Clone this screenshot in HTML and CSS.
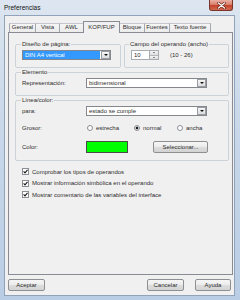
FILE: index.html
```html
<!DOCTYPE html>
<html lang="es">
<head>
<meta charset="utf-8">
<title>Preferencias</title>
<link rel="stylesheet" href="styles.css">
</head>
<body>
<div class="window">
  <div class="titlebar">
    <span class="title">Preferencias</span>
    <span class="close">
      <svg width="9" height="7" viewBox="0 0 9 7"><path d="M1.5 1 L7.5 6 M7.5 1 L1.5 6" stroke="#5a1e14" stroke-width="2.4" stroke-linecap="round"/><path d="M1.5 1 L7.5 6 M7.5 1 L1.5 6" stroke="#ffffff" stroke-width="1.3" stroke-linecap="round"/></svg>
    </span>
  </div>
  <div class="client">
    <div class="tabs">
      <span class="tab t-general">General</span>
      <span class="tab t-vista">Vista</span>
      <span class="tab t-awl">AWL</span>
      <span class="tab t-kop selected">KOP/FUP</span>
      <span class="tab t-bloque">Bloque</span>
      <span class="tab t-fuentes">Fuentes</span>
      <span class="tab t-texto">Texto fuente</span>
    </div>
    <div class="panel">
      <div class="row-top">
        <fieldset class="group g-layout">
          <legend>Diseño de página:</legend>
          <div class="combo combo-layout sel">
            <span class="combo-text">DIN A4 vertical</span>
            <span class="combo-btn"><span class="tri"></span></span>
          </div>
        </fieldset>
        <fieldset class="group g-width">
          <legend>Campo del operando (ancho)</legend>
          <div class="spin-row">
            <div class="spin">
              <span class="spin-edit">10</span>
              <span class="spin-btns">
                <span class="spin-up"><span class="tri-up"></span></span>
                <span class="spin-down"><span class="tri-sm"></span></span>
              </span>
            </div>
            <span class="range">(10 - 26)</span>
          </div>
        </fieldset>
      </div>
      <fieldset class="group g-element">
        <legend>Elemento</legend>
        <div class="field-row">
          <span class="lbl">Representación:</span>
          <div class="combo combo-wide">
            <span class="combo-text">bidimensional</span>
            <span class="combo-btn"><span class="tri"></span></span>
          </div>
        </div>
      </fieldset>
      <fieldset class="group g-line">
        <legend>Línea/color:</legend>
        <div class="field-row">
          <span class="lbl">para:</span>
          <div class="combo combo-wide">
            <span class="combo-text">estado se cumple</span>
            <span class="combo-btn"><span class="tri"></span></span>
          </div>
        </div>
        <div class="grosor-row">
          <span class="lbl">Grosor:</span>
          <span class="opt"><span class="radio"></span>estrecha</span>
          <span class="opt"><span class="radio on"></span>normal</span>
          <span class="opt"><span class="radio"></span>ancha</span>
        </div>
        <div class="color-row">
          <span class="lbl">Color:</span>
          <span class="swatch"></span>
          <span class="btn btn-select">Seleccionar...</span>
        </div>
      </fieldset>
      <div class="checks">
        <div class="check-row"><span class="check"><svg width="5" height="5" viewBox="0 0 5 5"><path d="M0.6 2.4 L2 3.9 L4.5 0.8" fill="none" stroke="#1a1a1a" stroke-width="1.1"/></svg></span>Comprobar los tipos de operandos</div>
        <div class="check-row"><span class="check"><svg width="5" height="5" viewBox="0 0 5 5"><path d="M0.6 2.4 L2 3.9 L4.5 0.8" fill="none" stroke="#1a1a1a" stroke-width="1.1"/></svg></span>Mostrar información simbólica en el operando</div>
        <div class="check-row"><span class="check"><svg width="5" height="5" viewBox="0 0 5 5"><path d="M0.6 2.4 L2 3.9 L4.5 0.8" fill="none" stroke="#1a1a1a" stroke-width="1.1"/></svg></span>Mostrar comentario de las variables del interface</div>
      </div>
    </div>
    <div class="buttons">
      <span class="btn btn-dlg">Aceptar</span>
      <span class="btn btn-dlg btn-cancel">Cancelar</span>
      <span class="btn btn-dlg btn-help">Ayuda</span>
    </div>
  </div>
</div>
</body>
</html>
```
FILE: styles.css
```css
* { box-sizing: border-box; }

body {
  margin: 0;
  font-family: "Liberation Sans", Arial, sans-serif;
  font-size: 6px;
  color: #2e2e2e;
  background: #c3d3e6;
}

.window {
  width: 240px;
  height: 300px;
  overflow: hidden;
  display: flex;
  flex-direction: column;
  background: linear-gradient(180deg, #dde6f0 0%, #cbd9ea 35%, #b9cde4 100%);
}

.titlebar {
  height: 15px;
  display: flex;
  align-items: flex-start;
  padding-left: 4px;
}

.title {
  font-size: 6.5px;
  line-height: 16px;
  color: #111;
}

.close {
  margin-left: auto;
  margin-right: 7px;
  width: 24px;
  height: 11px;
  border: 1px solid #7a3328;
  border-top: none;
  border-radius: 0 0 3px 3px;
  background: linear-gradient(180deg, #eab0a4 0%, #d9806d 45%, #c4442b 55%, #d06a52 100%);
  display: flex;
  align-items: center;
  justify-content: center;
}

.close svg { display: block; }

.client {
  margin-left: 4px;
  width: 231px;
  height: 281px;
  background: #f0f0f0;
  border: 1px solid #90a3ba;
  display: flex;
  flex-direction: column;
}

/* tabs */
.tabs {
  display: flex;
  align-items: flex-end;
  height: 11px;
  margin-top: 5px;
  margin-left: 4px;
}

.tab {
  height: 9px;
  line-height: 7px;
  text-align: center;
  white-space: nowrap;
  border: 1px solid #a3a7ae;
  border-top-color: #c4c8ce;
  border-left: none;
  border-bottom: none;
  background: linear-gradient(180deg, #f5f5f5, #ebebeb);
}

.tab:first-child { border-left: 1px solid #a3a7ae; }

.t-general { width: 27px; }
.t-vista { width: 24px; }
.t-awl { width: 24px; }
.t-kop { width: 37px; }
.t-bloque { width: 25px; }
.t-fuentes { width: 25px; }
.t-texto { width: 41px; }

.tab.selected {
  position: relative;
  z-index: 1;
  height: 12px;
  line-height: 10px;
  margin-left: -1px;
  margin-bottom: -1px;
  border: 1px solid #898c95;
  border-bottom: none;
  background: #f0f0f0;
}

/* panel */
.panel {
  margin-left: 3px;
  width: 225px;
  height: 243px;
  border: 1px solid #898c95;
  background: #f0f0f0;
  padding: 7px 3px 0 6px;
}

.row-top {
  display: flex;
  gap: 3px;
}

fieldset.group {
  margin: 0;
  min-width: 0;
  padding: 2px 6px 7px;
  border: 1px solid #cbd2d8;
  border-radius: 2px;
}

legend {
  padding: 0 1px;
  margin-left: -1px;
  line-height: 8px;
  font-size: 6px;
  color: #2e2e2e;
}

.g-layout { width: 106px; }

.g-width {
  flex: 1;
  padding-left: 4px;
}

.g-width legend { margin-left: -2px; }

.g-element {
  margin-top: 6px;
  padding-top: 1px;
  padding-bottom: 4px;
}

.g-line {
  margin-top: 7px;
  padding-top: 3px;
  padding-bottom: 6px;
}

.field-row {
  display: grid;
  grid-template-columns: 64px 121px;
  align-items: center;
  height: 10px;
}

.lbl { white-space: nowrap; }

/* combo boxes */
.combo {
  display: flex;
  height: 10px;
  border: 1px solid #84878c;
  background: #fff;
}

.combo-layout { width: 89px; }

.combo-text {
  flex: 1;
  line-height: 8px;
  padding-left: 2px;
  white-space: nowrap;
  overflow: hidden;
}

.combo.sel .combo-text {
  background: #3399ff;
  color: #fff;
  margin: 0 1px 0 0;
}

.combo-btn {
  width: 9px;
  border: 1px solid #9a9da3;
  background: linear-gradient(180deg, #f5f5f5, #dcdcdc);
  display: flex;
  align-items: center;
  justify-content: center;
}

.tri {
  width: 0;
  height: 0;
  border-left: 2px solid transparent;
  border-right: 2px solid transparent;
  border-top: 2px solid #111;
}

/* spinner */
.spin-row {
  display: flex;
  align-items: center;
  height: 10px;
}

.spin {
  display: flex;
  height: 10px;
}

.spin-edit {
  width: 18px;
  border: 1px solid #a9acb2;
  border-right: none;
  background: #fff;
  line-height: 8px;
  padding-left: 2px;
}

.spin-btns {
  width: 10px;
  display: flex;
  flex-direction: column;
  border: 1px solid #a9acb2;
}

.spin-up,
.spin-down {
  flex: 1;
  display: flex;
  align-items: center;
  justify-content: center;
  background: linear-gradient(180deg, #f5f5f5, #dedede);
}

.spin-up { border-bottom: 1px solid #b5b8bd; }

.tri-up {
  width: 0;
  height: 0;
  border-left: 1.5px solid transparent;
  border-right: 1.5px solid transparent;
  border-bottom: 1.5px solid #222;
}

.tri-sm {
  width: 0;
  height: 0;
  border-left: 1.5px solid transparent;
  border-right: 1.5px solid transparent;
  border-top: 1.5px solid #222;
}

.range {
  margin-left: 11px;
  white-space: nowrap;
}

/* radios */
.grosor-row {
  display: grid;
  grid-template-columns: 65px 47px 43px auto;
  align-items: center;
  height: 10px;
  margin-top: 7px;
}

.opt {
  display: flex;
  align-items: center;
  gap: 3px;
  white-space: nowrap;
}

.radio {
  width: 6px;
  height: 6px;
  border-radius: 50%;
  border: 1px solid #8b8e93;
  background: #fff;
  flex: none;
}

.radio.on {
  background: radial-gradient(circle, #1a1a1a 0 1.2px, #fff 1.7px);
}

/* color */
.color-row {
  display: flex;
  align-items: center;
  height: 12px;
  margin-top: 8px;
}

.color-row .lbl { width: 64px; }

.swatch {
  width: 42px;
  height: 12px;
  background: #00ff00;
  border: 1px solid #4a4a4a;
}

.btn {
  display: block;
  height: 12px;
  border: 1px solid #8d8f92;
  border-radius: 2px;
  background: linear-gradient(180deg, #f6f6f6 0%, #ebebeb 50%, #dddddd 51%, #d3d3d3 100%);
  text-align: center;
  line-height: 10px;
  white-space: nowrap;
  color: #2e2e2e;
}

.btn-select {
  width: 55px;
  margin-left: 25px;
}

/* checkboxes */
.checks {
  margin-top: 5px;
  margin-left: 7px;
}

.check-row {
  display: flex;
  align-items: center;
  gap: 3px;
  height: 11.5px;
  white-space: nowrap;
}

.check {
  width: 7px;
  height: 7px;
  border: 1px solid #8b8e93;
  background: #fff;
  display: flex;
  align-items: center;
  justify-content: center;
  flex: none;
}

.check svg { display: block; }

/* dialog buttons */
.buttons {
  display: flex;
  margin: 4px 3px 0 3px;
}

.btn-dlg { width: 37px; }

.btn-cancel { margin-left: auto; }

.btn-help {
  width: 36px;
  margin-left: 11px;
}
```
